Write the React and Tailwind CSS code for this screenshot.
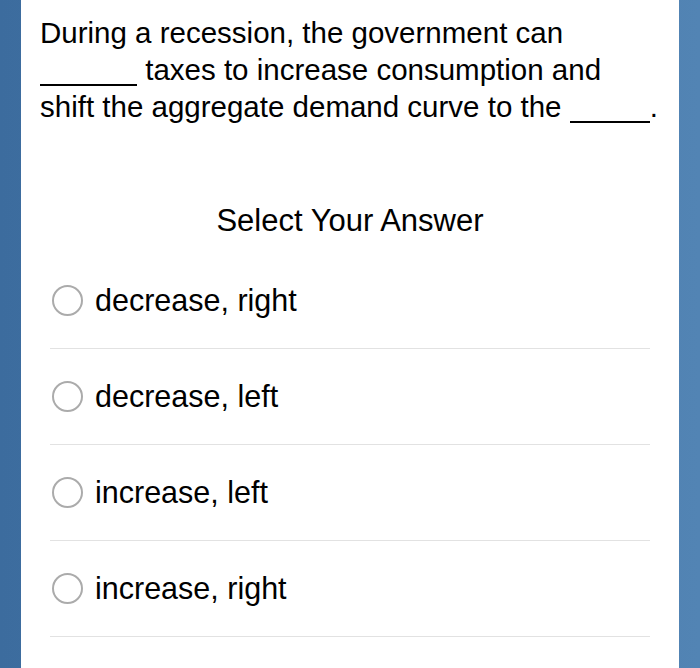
const options = ['decrease, right', 'decrease, left', 'increase, left', 'increase, right']

export default function App() {
  return (
    <div
      className="flex h-[668px] w-[700px] bg-gradient-to-r from-[#3c6c9e] to-[#5284b4] px-[21px] text-black"
      style={{ fontFamily: '"Liberation Sans", Arial, sans-serif' }}
    >
      <div className="flex-1 bg-white">
        <p className="px-[19px] pt-[14px] text-[29.5px] leading-[37px]">
          During a recession, the government can
          <br />
          <span className="inline-block h-[30px] w-[97px] border-b-2 border-black align-[-6px]" /> taxes to increase consumption and
          <br />
          shift the aggregate demand curve to the{' '}
          <span className="inline-block h-[30px] w-[80px] border-b-2 border-black align-[-6px]" />.
        </p>

        <h2 className="mt-[81px] text-center text-[31px] leading-[30px]">Select Your Answer</h2>

        <ul className="mx-[29px] mt-[17px]">
          {options.map((o) => (
            <li key={o} className="flex h-[96px] items-center gap-[12px] border-b border-[#e2e2e2] pl-[2px]">
              <span className="h-[31px] w-[31px] shrink-0 rounded-full border-2 border-[#ababab]" />
              <span className="text-[30.5px] leading-none">{o}</span>
            </li>
          ))}
        </ul>
      </div>
    </div>
  )
}
